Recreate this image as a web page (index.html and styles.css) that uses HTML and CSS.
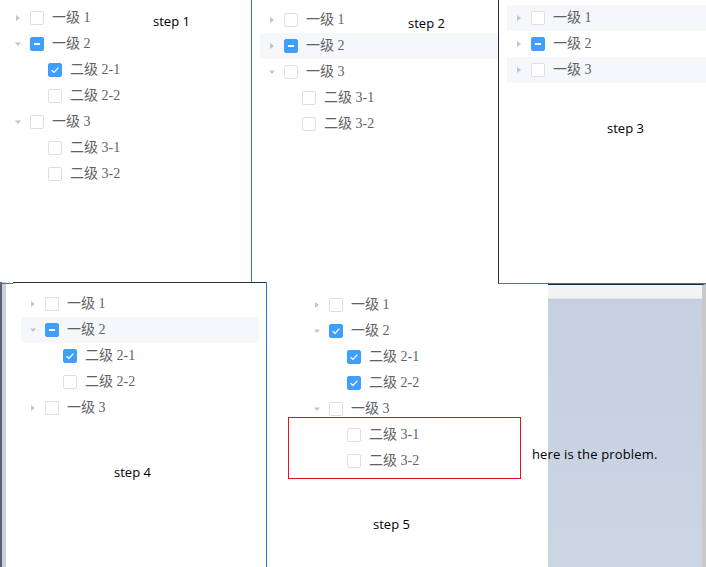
FILE: index.html
```html
<!DOCTYPE html>
<html>
<head>
<meta charset="utf-8">
<link rel="stylesheet" href="styles.css">
</head>
<body>
<div class="canvas">

  <!-- step 1 -->
  <div class="panel p1">
    <div class="tree t1">
      <div class="node">
        <div class="row"><span class="caret"><svg viewBox="0 0 12 12"><polygon points="4,3 8,6 4,9"/></svg></span><span class="cb"></span><span class="lbl">一级 1</span></div>
      </div>
      <div class="node">
        <div class="row"><span class="caret"><svg viewBox="0 0 12 12"><polygon points="3,4.5 9,4.5 6,8"/></svg></span><span class="cb ind"></span><span class="lbl">一级 2</span></div>
        <div class="children">
          <div class="row"><span class="caret leaf"></span><span class="cb on"><svg viewBox="0 0 14 14"><polyline points="3.6,7.2 6,9.4 10.4,4.6"/></svg></span><span class="lbl">二级 2-1</span></div>
          <div class="row"><span class="caret leaf"></span><span class="cb"></span><span class="lbl">二级 2-2</span></div>
        </div>
      </div>
      <div class="node">
        <div class="row"><span class="caret"><svg viewBox="0 0 12 12"><polygon points="3,4.5 9,4.5 6,8"/></svg></span><span class="cb"></span><span class="lbl">一级 3</span></div>
        <div class="children">
          <div class="row"><span class="caret leaf"></span><span class="cb"></span><span class="lbl">二级 3-1</span></div>
          <div class="row"><span class="caret leaf"></span><span class="cb"></span><span class="lbl">二级 3-2</span></div>
        </div>
      </div>
    </div>
    <span class="note n1">step 1</span>
  </div>

  <!-- step 2 -->
  <div class="panel p2">
    <div class="tree t2">
      <div class="node">
        <div class="row"><span class="caret"><svg viewBox="0 0 12 12"><polygon points="4,3 8,6 4,9"/></svg></span><span class="cb"></span><span class="lbl">一级 1</span></div>
      </div>
      <div class="node">
        <div class="row hl"><span class="caret"><svg viewBox="0 0 12 12"><polygon points="4,3 8,6 4,9"/></svg></span><span class="cb ind"></span><span class="lbl">一级 2</span></div>
      </div>
      <div class="node">
        <div class="row"><span class="caret"><svg viewBox="0 0 12 12"><polygon points="3,4.5 9,4.5 6,8"/></svg></span><span class="cb"></span><span class="lbl">一级 3</span></div>
        <div class="children">
          <div class="row"><span class="caret leaf"></span><span class="cb"></span><span class="lbl">二级 3-1</span></div>
          <div class="row"><span class="caret leaf"></span><span class="cb"></span><span class="lbl">二级 3-2</span></div>
        </div>
      </div>
    </div>
    <span class="note n2">step 2</span>
  </div>

  <!-- step 3 -->
  <div class="panel p3">
    <div class="tree t3">
      <div class="node">
        <div class="row hl"><span class="caret"><svg viewBox="0 0 12 12"><polygon points="4,3 8,6 4,9"/></svg></span><span class="cb"></span><span class="lbl">一级 1</span></div>
      </div>
      <div class="node">
        <div class="row"><span class="caret"><svg viewBox="0 0 12 12"><polygon points="4,3 8,6 4,9"/></svg></span><span class="cb ind"></span><span class="lbl">一级 2</span></div>
      </div>
      <div class="node">
        <div class="row hl"><span class="caret"><svg viewBox="0 0 12 12"><polygon points="4,3 8,6 4,9"/></svg></span><span class="cb"></span><span class="lbl">一级 3</span></div>
      </div>
    </div>
    <span class="note n3">step 3</span>
  </div>

  <!-- step 4 -->
  <div class="panel p4">
    <div class="tree t4">
      <div class="node">
        <div class="row"><span class="caret"><svg viewBox="0 0 12 12"><polygon points="4,3 8,6 4,9"/></svg></span><span class="cb"></span><span class="lbl">一级 1</span></div>
      </div>
      <div class="node">
        <div class="row hl"><span class="caret"><svg viewBox="0 0 12 12"><polygon points="3,4.5 9,4.5 6,8"/></svg></span><span class="cb ind"></span><span class="lbl">一级 2</span></div>
        <div class="children">
          <div class="row"><span class="caret leaf"></span><span class="cb on"><svg viewBox="0 0 14 14"><polyline points="3.6,7.2 6,9.4 10.4,4.6"/></svg></span><span class="lbl">二级 2-1</span></div>
          <div class="row"><span class="caret leaf"></span><span class="cb"></span><span class="lbl">二级 2-2</span></div>
        </div>
      </div>
      <div class="node">
        <div class="row"><span class="caret"><svg viewBox="0 0 12 12"><polygon points="4,3 8,6 4,9"/></svg></span><span class="cb"></span><span class="lbl">一级 3</span></div>
      </div>
    </div>
    <span class="note n4">step 4</span>
  </div>

  <!-- step 5 -->
  <div class="panel p5">
    <div class="tree t5">
      <div class="node">
        <div class="row"><span class="caret"><svg viewBox="0 0 12 12"><polygon points="4,3 8,6 4,9"/></svg></span><span class="cb"></span><span class="lbl">一级 1</span></div>
      </div>
      <div class="node">
        <div class="row"><span class="caret"><svg viewBox="0 0 12 12"><polygon points="3,4.5 9,4.5 6,8"/></svg></span><span class="cb on"><svg viewBox="0 0 14 14"><polyline points="3.6,7.2 6,9.4 10.4,4.6"/></svg></span><span class="lbl">一级 2</span></div>
        <div class="children">
          <div class="row"><span class="caret leaf"></span><span class="cb on"><svg viewBox="0 0 14 14"><polyline points="3.6,7.2 6,9.4 10.4,4.6"/></svg></span><span class="lbl">二级 2-1</span></div>
          <div class="row"><span class="caret leaf"></span><span class="cb on"><svg viewBox="0 0 14 14"><polyline points="3.6,7.2 6,9.4 10.4,4.6"/></svg></span><span class="lbl">二级 2-2</span></div>
        </div>
      </div>
      <div class="node">
        <div class="row"><span class="caret"><svg viewBox="0 0 12 12"><polygon points="3,4.5 9,4.5 6,8"/></svg></span><span class="cb"></span><span class="lbl">一级 3</span></div>
        <div class="children">
          <div class="row"><span class="caret leaf"></span><span class="cb"></span><span class="lbl">二级 3-1</span></div>
          <div class="row"><span class="caret leaf"></span><span class="cb"></span><span class="lbl">二级 3-2</span></div>
        </div>
      </div>
    </div>
    <div class="redbox"></div>
    <span class="note n5">step 5</span>
  </div>

  <!-- right grey area -->
  <div class="panel p6">
    <div class="p6-top"></div>
    <div class="p6-body"></div>
  </div>

  <span class="note problem">here is the problem.</span>
</div>
</body>
</html>
```

FILE: styles.css
```css
html, body {
  margin: 0;
  padding: 0;
  background: #ffffff;
}

.canvas {
  position: relative;
  width: 706px;
  height: 567px;
  overflow: hidden;
  background: #ffffff;
}

.panel {
  position: absolute;
  box-sizing: border-box;
  background: #ffffff;
}

.p1 {
  left: 0;
  top: 0;
  width: 252px;
  height: 282px;
  border-right: 1px solid #1f7fd4;
}

.p2 {
  left: 252px;
  top: 0;
  width: 246px;
  height: 282px;
}

.p3 {
  left: 498px;
  top: 0;
  width: 208px;
  height: 284px;
  border-left: 1px solid #2b2f3a;
  border-bottom: 1px solid #1f7fd4;
}

.p4 {
  left: 0;
  top: 282px;
  width: 267px;
  height: 285px;
  border-right: 1px solid #1f7fd4;
  background:
    linear-gradient(#2b2f3a, #2b2f3a) 13px 0 / calc(100% - 13px) 1px no-repeat,
    linear-gradient(#1f7fd4, #1f7fd4) 0 1px / 13px 1px no-repeat,
    linear-gradient(to right, #5b606b 0, #5b606b 2px, #c8d0e0 2px, #c8d0e0 6px, #ffffff 6px);
}

.p5 {
  left: 267px;
  top: 284px;
  width: 281px;
  height: 283px;
}

.p6 {
  left: 548px;
  top: 284px;
  width: 158px;
  height: 283px;
  border-top: 1px solid #23262d;
  border-right: 4px solid #c9c9c9;
  display: flex;
  flex-direction: column;
}

.p6-top {
  height: 13px;
  background: #f3f4f6;
  border-bottom: 1px solid #e2e5ea;
}

.p6-body {
  flex: 1;
  background: linear-gradient(#c6cfdf, #ccd5e4);
}

/* tree */
.tree {
  font-family: "Liberation Serif", "Noto Sans CJK SC", serif;
  font-size: 14px;
  color: #606266;
}

.t1 { margin: 5px 0 0 6px; }
.t2 { margin: 7px 0 0 8px; }
.t3 { margin: 5px 0 0 8px; }
.t4 { margin: 9px 0 0 21px; width: 238px; }
.t5 { margin: 8px 0 0 38px; }

.row {
  height: 26px;
  display: flex;
  align-items: center;
  white-space: nowrap;
}

.row.hl {
  background: #f5f7fa;
}

.children .row {
  padding-left: 18px;
}

.caret {
  width: 12px;
  height: 12px;
  padding: 6px;
  display: block;
  flex: none;
}

.caret svg {
  display: block;
  width: 12px;
  height: 12px;
  fill: #c0c4cc;
}

.caret.leaf svg {
  display: none;
}

.cb {
  box-sizing: border-box;
  width: 14px;
  height: 14px;
  flex: none;
  border: 1px solid #dcdfe6;
  border-radius: 2px;
  background: #ffffff;
  margin-right: 8px;
  position: relative;
  display: flex;
  align-items: center;
  justify-content: center;
}

.cb.on,
.cb.ind {
  background: #409eff;
  border-color: #409eff;
}

.cb.on svg {
  position: absolute;
  left: -1px;
  top: -1px;
  width: 14px;
  height: 14px;
  fill: none;
  stroke: #ffffff;
  stroke-width: 1.3;
}

.cb.ind::before {
  content: "";
  width: 6px;
  height: 2px;
  background: #ffffff;
}

.lbl {
  line-height: 26px;
}

/* annotations */
.note {
  position: absolute;
  font-family: "Open Sans", "Noto Sans", sans-serif;
  font-size: 13px;
  line-height: 16px;
  color: #000000;
  white-space: nowrap;
}

.n1 { left: 153px; top: 13px; }
.n2 { left: 156px; top: 15px; }
.n3 { left: 108px; top: 120px; }
.n4 { left: 114px; top: 182px; }
.n5 { left: 106px; top: 232px; }
.problem { left: 532px; top: 446px; letter-spacing: 0.15px; }

.redbox {
  position: absolute;
  left: 21px;
  top: 133px;
  width: 233px;
  height: 62px;
  box-sizing: border-box;
  border: 1px solid #e81123;
}
```
